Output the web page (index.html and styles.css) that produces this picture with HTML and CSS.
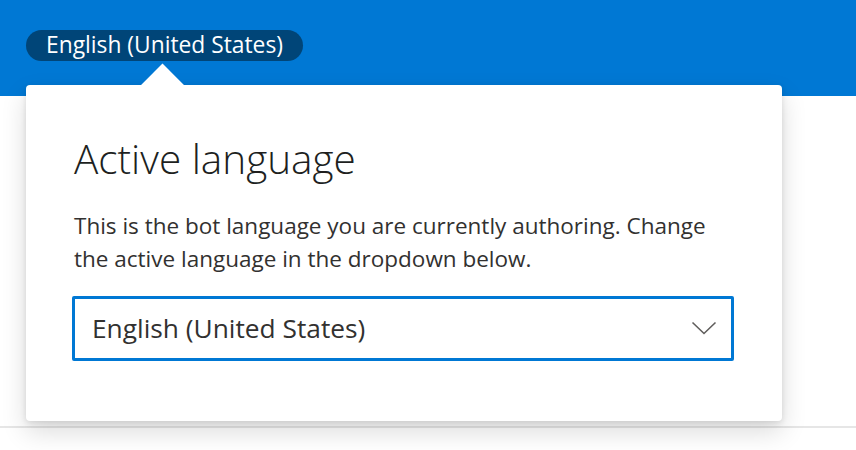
FILE: index.html
```html
<!DOCTYPE html>
<html lang="en">
<head>
    <meta charset="UTF-8">
    <meta name="viewport" content="width=device-width, initial-scale=1.0">
    <title>Active language</title>
<link rel="stylesheet" href="styles.css">
</head>
<body>
<div class="topbar">
    <span class="lang-pill">English (United States)</span>
</div>
<div class="page"></div>

<div class="callout">
    <h2 class="callout-title">Active language</h2>
    <p class="callout-text">This is the bot language you are currently authoring. Change the active language in the dropdown below.</p>
    <div class="dropdown" tabindex="0">
        <span class="dropdown-value">English (United States)</span>
        <svg class="chevron" width="26" height="14" viewBox="0 0 26 14">
            <polyline points="1.5,1.5 13,12.5 24.5,1.5" fill="none" stroke="#605e5c" stroke-width="1.6"/>
        </svg>
    </div>
</div>
</body>
</html>
```

FILE: styles.css
```css
body {
    margin: 0;
    width: 856px;
    height: 450px;
    overflow: hidden;
    background-color: #fff;
    font-family: "Open Sans", "Noto Sans", sans-serif;
    position: relative;
}
.topbar {
    height: 96px;
    box-sizing: border-box;
    padding: 30px 0 0 26px;
    background-color: #0078d4;
}
.lang-pill {
    display: inline-block;
    height: 31px;
    line-height: 30px;
    padding: 0 20px;
    border-radius: 16px;
    background-color: #004578;
    color: #fff;
    font-size: 22.8px;
}
.page {
    height: 330px;
    border-bottom: 2px solid #e6e6e6;
}
.callout {
    position: absolute;
    left: 26px;
    top: 85px;
    width: 756px;
    height: 336px;
    box-sizing: border-box;
    padding: 48px 48px 0 48px;
    background-color: #fff;
    border-radius: 4px;
    box-shadow: 0 11px 26px rgba(0, 0, 0, 0.14), 0 2px 6px rgba(0, 0, 0, 0.11);
}
.callout::before {
    content: "";
    position: absolute;
    left: 121px;
    top: -15px;
    width: 31px;
    height: 31px;
    background-color: #fff;
    transform: rotate(45deg);
}
.callout-title {
    margin: 0 0 23px;
    font-size: 40.5px;
    font-weight: 300;
    line-height: 1.3;
    color: #201f1e;
}
.callout-text {
    margin: 0 0 21px;
    width: 650px;
    font-size: 22.5px;
    line-height: 33px;
    color: #323130;
}
.dropdown {
    display: flex;
    align-items: center;
    justify-content: space-between;
    width: 662px;
    height: 65px;
    margin-left: -2px;
    box-sizing: border-box;
    padding: 0 14px 0 17px;
    border: 3px solid #0078d4;
    border-radius: 2px;
    outline: none;
}
.dropdown-value {
    font-size: 26.3px;
    color: #323130;
}
.chevron {
    display: block;
}
```
